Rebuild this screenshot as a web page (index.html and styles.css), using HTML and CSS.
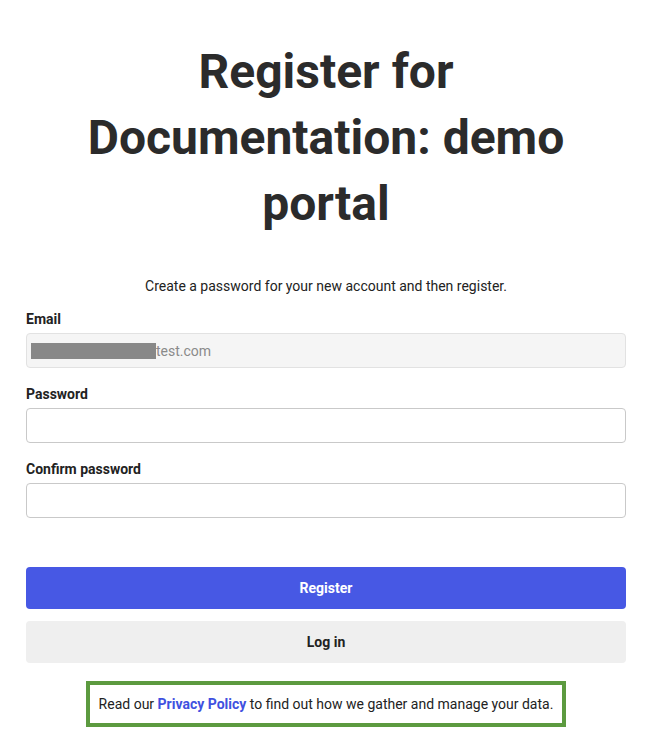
FILE: index.html
```html
<!DOCTYPE html>
<html lang="en">
<head>
<meta charset="utf-8">
<title>Register for Documentation: demo portal</title>
<link rel="stylesheet" href="styles.css">
</head>
<body>
<main class="page">
  <h1 class="title">Register for Documentation: demo portal</h1>
  <p class="intro">Create a password for your new account and then register.</p>
  <form class="form">
    <div class="field">
      <label class="label">Email</label>
      <div class="input input-disabled"><span class="redact"></span><span class="email-tail">test.com</span></div>
    </div>
    <div class="field">
      <label class="label">Password</label>
      <div class="input"></div>
    </div>
    <div class="field">
      <label class="label">Confirm password</label>
      <div class="input"></div>
    </div>
    <div class="actions">
      <button type="button" class="btn btn-primary">Register</button>
      <button type="button" class="btn btn-secondary">Log in</button>
    </div>
  </form>
  <div class="notice-wrap">
    <p class="notice">Read our <a class="link" href="#">Privacy Policy</a> to find out how we gather and manage your data.</p>
  </div>
</main>
</body>
</html>
```
FILE: styles.css
```css
* { box-sizing: border-box; }
html, body { margin: 0; padding: 0; background: #fff; }
body {
  font-family: Roboto, "Liberation Sans", Arial, sans-serif;
  color: #222;
  font-size: 14px;
}
.page {
  padding: 0 26px;
}
.title {
  margin: 39px 40px 0;
  font-size: 48px;
  line-height: 66px;
  font-weight: 700;
  text-align: center;
  color: #2b2b2b;
}
.intro {
  margin: 39px 0 0;
  text-align: center;
  line-height: 20px;
  color: #222;
}
.form {
  display: flex;
  flex-direction: column;
  margin-top: 3px;
}
.field {
  display: flex;
  flex-direction: column;
  margin-top: 10px;
}
.field + .field { margin-top: 16px; }
.label {
  font-weight: 700;
  line-height: 20px;
  margin-bottom: 4px;
  color: #222;
}
.input {
  height: 35px;
  border: 1px solid #c9c9c9;
  border-radius: 4px;
  background: #fff;
  display: flex;
  align-items: center;
  padding-left: 4px;
}
.input-disabled {
  background: #f5f5f5;
  border-color: #e2e2e2;
}
.redact {
  width: 125px;
  height: 16px;
  background: #888;
}
.email-tail {
  color: #8a8a8a;
  font-size: 14px;
}
.actions {
  display: flex;
  flex-direction: column;
  gap: 12px;
  margin-top: 49px;
}
.btn {
  height: 42px;
  border: none;
  border-radius: 4px;
  font-family: inherit;
  font-size: 14px;
  font-weight: 700;
  cursor: pointer;
}
.btn-primary {
  background: #4758e4;
  color: #fff;
}
.btn-secondary {
  background: #efefef;
  color: #222;
}
.notice-wrap {
  display: flex;
  justify-content: center;
  margin-top: 18px;
}
.notice {
  margin: 0;
  border: 4px solid #5c9a3f;
  padding: 9px 9px;
  line-height: 20px;
  color: #222;
}
.link {
  color: #3f51e0;
  font-weight: 700;
  text-decoration: none;
}
```
